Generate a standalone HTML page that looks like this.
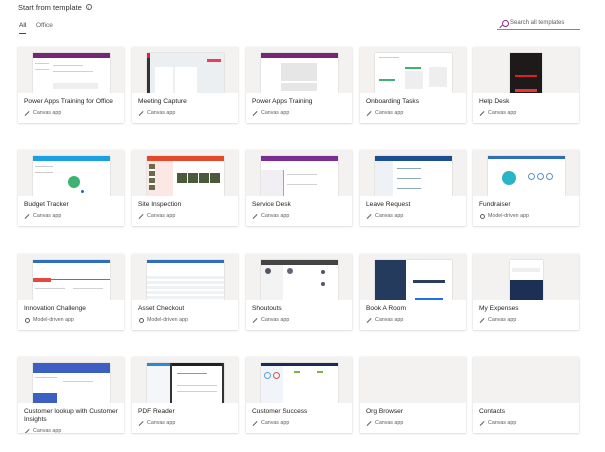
<!DOCTYPE html>
<html><head><meta charset="utf-8">
<style>
*{margin:0;padding:0;box-sizing:border-box}
body{width:605px;height:452px;overflow:hidden;background:#fff;font-family:"Liberation Sans",sans-serif;color:#323130;position:relative}
.h{position:absolute;left:18px;top:3px;font-size:7.5px;color:#323130}
.h span{display:inline-block;width:6px;height:6px;border:0.7px solid #605e5c;border-radius:50%;margin-left:4px;vertical-align:1px;font-size:4px;text-align:center;line-height:5px}
.tab{position:absolute;top:22px;font-size:6.5px}
.ul{position:absolute;left:19px;top:33px;width:7px;height:1px;background:#b4009e}
.search{position:absolute;left:497px;top:18px;width:83px;height:12px;border-bottom:1px solid #8a8886;font-size:6px;color:#605e5c;padding-left:13px;line-height:11px}
.search:before{content:"";position:absolute;left:5px;top:2px;width:5px;height:5px;border:0.8px solid #8a2c8a;border-radius:50%}
.search:after{content:"";position:absolute;left:2px;top:8px;width:4px;height:0.8px;background:#8a2c8a;transform:rotate(-45deg)}
.card{position:absolute;width:106px;height:76px;background:#fff;box-shadow:0 0.6px 2px rgba(0,0,0,.22);overflow:hidden}
.img{position:absolute;left:0;top:0;width:106px;height:46px;background:#f3f2f1;overflow:hidden}
.t{position:absolute;left:15px;top:6px;width:77px;height:40px;background:#fff;box-shadow:0 0 1px rgba(0,0,0,.3);overflow:hidden}
.bar{position:absolute;left:0;top:0;width:100%;height:5px}
.ti{position:absolute;left:6px;top:51px;font-size:6.6px;color:#201f1e;width:98px;line-height:7.6px}
.sub{position:absolute;left:6px;top:63px;font-size:5.3px;color:#605e5c;padding-left:9px}
.sub:before{content:"";position:absolute;left:0;top:3px;width:6px;height:0.8px;background:#605e5c;transform:rotate(-45deg)}
.sub.m:before{width:3px;height:3px;border:0.7px solid #605e5c;border-radius:50%;background:none;transform:none;top:1px;left:1px}
.ln{position:absolute;height:1px;background:#d0d0d0}
</style></head><body>
<div class="h">Start from template<span>i</span></div>
<div class="tab" style="left:19px;color:#201f1e">All</div>
<div class="tab" style="left:36px;color:#605e5c">Office</div>
<div class="ul"></div>
<div class="search">Search all templates</div>

<!-- Row 1 -->
<div class="card" style="left:18px;top:47px"><div class="img"><div class="t"><div class="bar" style="background:#742774"></div><div class="ln" style="left:20px;top:12px;width:30px"></div><div class="ln" style="left:20px;top:18px;width:40px"></div><div class="ln" style="left:2px;top:10px;width:14px"></div><div class="ln" style="left:2px;top:16px;width:14px"></div><div class="ln" style="left:20px;top:30px;width:45px;height:6px;background:#eee"></div></div></div><div class="ti">Power Apps Training for Office</div><div class="sub">Canvas app</div></div>
<div class="card" style="left:132px;top:47px"><div class="img"><div class="t" style="background:#eceff1"><div style="position:absolute;left:0;top:0;width:3px;height:100%;background:#333"></div><div style="position:absolute;left:0;top:0;width:3px;height:5px;background:#e8194a"></div><div style="position:absolute;left:60px;top:6px;width:14px;height:3px;background:#ef3b5a"></div><div style="position:absolute;left:8px;top:14px;width:18px;height:26px;background:#fff"></div><div style="position:absolute;left:28px;top:14px;width:22px;height:26px;background:#fff"></div></div></div><div class="ti">Meeting Capture</div><div class="sub">Canvas app</div></div>
<div class="card" style="left:246px;top:47px"><div class="img"><div class="t"><div class="bar" style="background:#742774"></div><div class="ln" style="left:20px;top:10px;width:36px;height:18px;background:#e6e6e6"></div><div class="ln" style="left:20px;top:30px;width:36px;height:8px;background:#e6e6e6"></div></div></div><div class="ti">Power Apps Training</div><div class="sub">Canvas app</div></div>
<div class="card" style="left:360px;top:47px"><div class="img"><div class="t"><div class="ln" style="left:4px;top:4px;width:20px;background:#ccc"></div><div class="ln" style="left:4px;top:26px;width:16px;height:1.5px;background:#3cb371"></div><div class="ln" style="left:30px;top:14px;width:16px;height:1.5px;background:#3cb371"></div><div class="ln" style="left:54px;top:14px;width:18px;height:20px;background:#eee"></div><div class="ln" style="left:30px;top:18px;width:18px;height:18px;background:#eee"></div></div></div><div class="ti">Onboarding Tasks</div><div class="sub">Canvas app</div></div>
<div class="card" style="left:473px;top:47px"><div class="img"><div class="t" style="left:37px;width:32px;background:#1e1a1a"><div style="position:absolute;left:5px;top:22px;width:22px;height:2px;background:#d22"></div><div style="position:absolute;left:5px;top:36px;width:22px;height:3px;background:#e33"></div></div></div><div class="ti">Help Desk</div><div class="sub">Canvas app</div></div>

<!-- Row 2 -->
<div class="card" style="left:18px;top:150px"><div class="img"><div class="t"><div class="bar" style="background:#1ba1e2"></div><div style="position:absolute;left:35px;top:20px;width:12px;height:12px;border-radius:50%;background:#3cb371"></div><div style="position:absolute;left:48px;top:34px;width:3px;height:3px;border-radius:50%;background:#1f6fa8"></div><div class="ln" style="left:2px;top:10px;width:18px;background:#ccc"></div><div class="ln" style="left:2px;top:16px;width:18px;background:#ccc"></div></div></div><div class="ti">Budget Tracker</div><div class="sub">Canvas app</div></div>
<div class="card" style="left:132px;top:150px"><div class="img"><div class="t"><div class="bar" style="background:#e24a2c"></div><div style="position:absolute;left:0;top:5px;width:26px;height:35px;background:#fbe7e4"></div><div style="position:absolute;left:2px;top:8px;width:6px;height:26px;background:repeating-linear-gradient(#6b6b4b 0 5px,#fff 5px 7px)"></div><div style="position:absolute;left:30px;top:17px;width:44px;height:10px;background:repeating-linear-gradient(90deg,#4a5a3a 0 10px,#fff 10px 11px)"></div></div></div><div class="ti">Site Inspection</div><div class="sub">Canvas app</div></div>
<div class="card" style="left:246px;top:150px"><div class="img"><div class="t"><div class="bar" style="background:#7b2d92"></div><div style="position:absolute;left:0;top:14px;width:22px;height:26px;background:#f1eef4"></div><div style="position:absolute;left:22px;top:14px;width:1px;height:26px;background:#8bc34a"></div><div class="ln" style="left:26px;top:18px;width:30px"></div><div class="ln" style="left:26px;top:28px;width:30px"></div></div></div><div class="ti">Service Desk</div><div class="sub">Canvas app</div></div>
<div class="card" style="left:360px;top:150px"><div class="img"><div class="t"><div class="bar" style="background:#1b4f91"></div><div style="position:absolute;left:0;top:5px;width:18px;height:35px;background:#eef2f7"></div><div class="ln" style="left:22px;top:12px;width:24px;background:#8ab"></div><div class="ln" style="left:22px;top:22px;width:24px;background:#8ab"></div><div class="ln" style="left:22px;top:32px;width:24px;background:#8ab"></div></div></div><div class="ti">Leave Request</div><div class="sub">Canvas app</div></div>
<div class="card" style="left:473px;top:150px"><div class="img"><div class="t"><div class="bar" style="background:#2f6fb7;height:3px"></div><div style="position:absolute;left:14px;top:15px;width:14px;height:14px;border-radius:50%;background:#2bb3c8"></div><div style="position:absolute;left:40px;top:17px;width:7px;height:7px;border-radius:50%;border:1.5px solid #5d8ec9"></div><div style="position:absolute;left:49px;top:17px;width:7px;height:7px;border-radius:50%;border:1.5px solid #5d8ec9"></div><div style="position:absolute;left:58px;top:17px;width:7px;height:7px;border-radius:50%;border:1.5px solid #5d8ec9"></div></div></div><div class="ti">Fundraiser</div><div class="sub m">Model-driven app</div></div>

<!-- Row 3 -->
<div class="card" style="left:18px;top:254px"><div class="img"><div class="t"><div class="bar" style="background:#2f6ebd;height:3px"></div><div style="position:absolute;left:0;top:18px;width:18px;height:4px;background:#e4483e"></div><div style="position:absolute;left:18px;top:19px;width:59px;height:1px;background:#e4483e"></div><div class="ln" style="left:2px;top:28px;width:30px"></div><div class="ln" style="left:40px;top:28px;width:30px"></div></div></div><div class="ti">Innovation Challenge</div><div class="sub m">Model-driven app</div></div>
<div class="card" style="left:132px;top:254px"><div class="img"><div class="t"><div class="bar" style="background:#2f6ebd;height:3px"></div><div style="position:absolute;left:0;top:16px;width:77px;height:24px;background:repeating-linear-gradient(#eef1f6 0 3px,#fff 3px 5px)"></div></div></div><div class="ti">Asset Checkout</div><div class="sub m">Model-driven app</div></div>
<div class="card" style="left:246px;top:254px"><div class="img"><div class="t"><div class="bar" style="background:#444"></div><div style="position:absolute;left:0;top:5px;width:22px;height:35px;background:#f3f3f3"></div><div style="position:absolute;left:4px;top:8px;width:6px;height:6px;border-radius:50%;background:#556"></div><div style="position:absolute;left:26px;top:8px;width:6px;height:6px;border-radius:50%;background:#667"></div><div style="position:absolute;left:60px;top:10px;width:4px;height:4px;border-radius:50%;background:#556"></div><div style="position:absolute;left:60px;top:22px;width:4px;height:4px;border-radius:50%;background:#556"></div></div></div><div class="ti">Shoutouts</div><div class="sub">Canvas app</div></div>
<div class="card" style="left:360px;top:254px"><div class="img"><div class="t"><div style="position:absolute;left:0;top:0;width:31px;height:40px;background:#243b5e"></div><div style="position:absolute;left:38px;top:20px;width:32px;height:3px;background:#2a3f5a"></div><div style="position:absolute;left:40px;top:38px;width:28px;height:2px;background:#1a73e8"></div></div></div><div class="ti">Book A Room</div><div class="sub">Canvas app</div></div>
<div class="card" style="left:473px;top:254px"><div class="img"><div class="t" style="left:37px;width:33px"><div style="position:absolute;left:0;top:20px;width:33px;height:20px;background:#1c2f55"></div><div class="ln" style="left:2px;top:8px;width:28px;height:4px;background:#eee"></div></div></div><div class="ti">My Expenses</div><div class="sub">Canvas app</div></div>

<!-- Row 4 -->
<div class="card" style="left:18px;top:357px"><div class="img"><div class="t"><div class="bar" style="background:#3c5fc4;height:10px"></div><div style="position:absolute;left:0;top:30px;width:24px;height:10px;background:#3c5fc4"></div><div class="ln" style="left:2px;top:14px;width:22px"></div><div class="ln" style="left:30px;top:18px;width:30px"></div></div></div><div class="ti">Customer lookup with Customer Insights</div><div class="sub" style="top:71px">Canvas app</div></div>
<div class="card" style="left:132px;top:357px"><div class="img"><div class="t"><div class="bar" style="background:#222;height:3px"></div><div style="position:absolute;left:0;top:0;width:23px;height:3px;background:#2b88d8"></div><div style="position:absolute;left:0;top:3px;width:23px;height:37px;background:#f4f6f9"></div><div style="position:absolute;left:23px;top:0;width:2px;height:40px;background:#333"></div><div style="position:absolute;left:75px;top:0;width:2px;height:40px;background:#333"></div><div class="ln" style="left:30px;top:10px;width:30px;background:#999"></div><div class="ln" style="left:30px;top:22px;width:40px"></div><div class="ln" style="left:30px;top:28px;width:40px"></div></div></div><div class="ti">PDF Reader</div><div class="sub">Canvas app</div></div>
<div class="card" style="left:246px;top:357px"><div class="img"><div class="t"><div class="bar" style="background:#1b2a57;height:3px"></div><div style="position:absolute;left:0;top:3px;width:22px;height:37px;background:#f1f4f8"></div><div style="position:absolute;left:3px;top:9px;width:7px;height:7px;border-radius:50%;border:1px solid #5ba3d9"></div><div style="position:absolute;left:12px;top:9px;width:7px;height:7px;border-radius:50%;border:1px solid #d9534f"></div><div style="position:absolute;left:33px;top:8px;width:6px;height:2px;background:#7cb342"></div><div style="position:absolute;left:56px;top:8px;width:6px;height:2px;background:#7cb342"></div></div></div><div class="ti">Customer Success</div><div class="sub">Canvas app</div></div>
<div class="card" style="left:360px;top:357px"><div class="img"></div><div class="ti">Org Browser</div><div class="sub">Canvas app</div></div>
<div class="card" style="left:473px;top:357px"><div class="img"></div><div class="ti">Contacts</div><div class="sub">Canvas app</div></div>
</body></html>
